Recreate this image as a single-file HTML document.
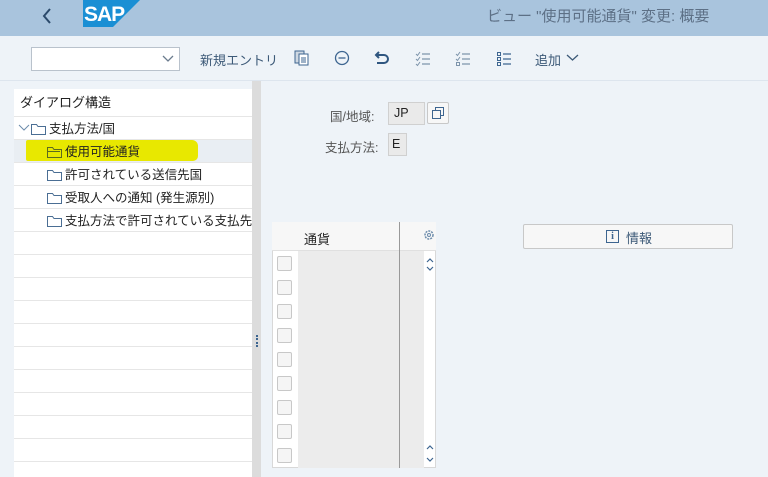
<!DOCTYPE html>
<html><head><meta charset="utf-8"><style>
*{margin:0;padding:0;box-sizing:border-box}
html,body{width:768px;height:477px;overflow:hidden}
body{background:#eef3f8;font-family:"Liberation Sans","Noto Sans CJK JP",sans-serif;position:relative;color:#222}
.a{position:absolute}
.hdr{left:0;top:0;width:768px;height:36px;background:#a9c4dd}
.tb{left:0;top:36px;width:768px;height:45px;background:#eef3f8;border-bottom:1px solid #dde5ee}
.lp{left:14px;top:89px;width:238px;height:388px;background:#fff}
.row{position:absolute;left:0;width:238px;height:23px;border-bottom:1px solid #e6e6e6;font-size:12.5px;line-height:24px;white-space:nowrap;overflow:hidden}
.f{display:inline-block;vertical-align:-2px;margin-right:3px}
.cb{position:absolute;left:5px;width:15px;height:15px;border:1px solid #c8c8c8;background:#f5f5f5;border-radius:2px}
</style></head><body>
<div class="a hdr"></div>
<svg class="a" style="left:40px;top:6px" width="14" height="20"><path d="M10 3 L4 10 L10 17" stroke="#2b4a6b" stroke-width="2" fill="none"/></svg>
<svg class="a" style="left:83px;top:0" width="57" height="27"><polygon points="0,0 57,0 30,27 0,27" fill="#1a8fd4"/><text x="1" y="21" font-family="Liberation Sans" font-weight="bold" font-size="21" fill="#fff" letter-spacing="-1">SAP</text></svg>
<div class="a" style="left:487px;top:5px;font-size:15px;color:#5d7086">ビュー "使用可能通貨" 変更: 概要</div>
<div class="a tb"></div>
<div class="a" style="left:31px;top:47px;width:149px;height:24px;background:#fff;border:1px solid #b9c2cc"></div>
<svg class="a" style="left:162px;top:55px" width="12" height="8"><path d="M1 1 L6 6 L11 1" stroke="#6b7c8e" stroke-width="1.3" fill="none"/></svg>
<div class="a" style="left:200px;top:50px;font-size:13px;color:#3d5a78">新規エントリ</div>
<svg class="a" style="left:294px;top:50px" width="16" height="16"><rect x="1" y="1" width="9" height="12" fill="#cfd8e2" stroke="#3d6590"/><rect x="5" y="4" width="9" height="11" fill="#fff" stroke="#3d6590"/><path d="M7 8h5M7 10h5M7 12h5" stroke="#3d6590"/></svg>
<svg class="a" style="left:334px;top:50px" width="16" height="16"><circle cx="8" cy="8" r="6.5" stroke="#3d6590" stroke-width="1.3" fill="none"/><path d="M4.5 8h7" stroke="#3d6590" stroke-width="1.3"/></svg>
<svg class="a" style="left:374px;top:50px" width="16" height="16"><path d="M5 2 L2 5 L5 8 M2 5 H10 A4 4 0 0 1 10 13 H3" stroke="#2f5680" stroke-width="2" fill="none"/></svg>
<svg class="a" style="left:415px;top:51px" width="16" height="16"><path d="M1 3l1.5 1.5L5 1M1 8l1.5 1.5L5 6M1 13l1.5 1.5L5 11" stroke="#7d94ab" fill="none"/><path d="M7 3h8M7 8h8M7 13h8" stroke="#7d94ab" stroke-width="1.3"/></svg>
<svg class="a" style="left:455px;top:51px" width="16" height="16"><path d="M1 3l1.5 1.5L5 1M1 8l1.5 1.5L5 6" stroke="#7d94ab" fill="none"/><rect x="1.5" y="11.5" width="3" height="3" stroke="#7d94ab" fill="none"/><path d="M7 3h8M7 8h8M7 13h8" stroke="#7d94ab" stroke-width="1.3"/></svg>
<svg class="a" style="left:496px;top:51px" width="16" height="16"><rect x="1.5" y="1.5" width="3" height="3" stroke="#3d6590" fill="none"/><rect x="1.5" y="6.5" width="3" height="3" stroke="#3d6590" fill="none"/><rect x="1.5" y="11.5" width="3" height="3" stroke="#3d6590" fill="none"/><path d="M7 3h8M7 8h8M7 13h8" stroke="#3d6590" stroke-width="1.3"/></svg>
<div class="a" style="left:535px;top:50px;font-size:13px;color:#3d5a78">追加</div>
<svg class="a" style="left:566px;top:54px" width="13" height="8"><path d="M1 1 L6.5 6 L12 1" stroke="#3d5a78" stroke-width="1.3" fill="none"/></svg>

<div class="a lp">
<div class="row" style="top:0;height:28px;line-height:27px;padding-left:6px;font-size:13px">ダイアログ構造</div>
<div class="row" style="top:28px;padding-left:4px"><svg class="f" width="12" height="10" style="margin-right:1px;vertical-align:0"><path d="M1 2 L6 7 L11 2" stroke="#6b8bab" fill="none"/></svg><svg class="f" width="15" height="13"><path d="M0.5 2.5V12.5H14.5V4.5H7L5.5 2.5Z" stroke="#4a6e94" fill="none"/></svg>支払方法/国</div>
<div class="row" style="top:51px;background:#e9eef3"></div>
<div class="a" style="left:12px;top:51px;width:172px;height:21px;background:#e8e800;border-radius:2px 6px 5px 2px"></div>
<div class="row" style="top:51px;padding-left:33px;border:none;background:transparent"><svg class="f" width="15" height="13"><path d="M0.5 2.5V12.5H14.5V4.5H7L5.5 2.5Z" stroke="#5c6a20" fill="none"/><path d="M0.5 6.5H13" stroke="#5c6a20"/></svg>使用可能通貨</div>
<div class="row" style="top:74px;padding-left:33px"><svg class="f" width="15" height="13"><path d="M0.5 2.5V12.5H14.5V4.5H7L5.5 2.5Z" stroke="#4a6e94" fill="none"/></svg>許可されている送信先国</div>
<div class="row" style="top:97px;padding-left:33px"><svg class="f" width="15" height="13"><path d="M0.5 2.5V12.5H14.5V4.5H7L5.5 2.5Z" stroke="#4a6e94" fill="none"/></svg>受取人への通知 (発生源別)</div>
<div class="row" style="top:120px;padding-left:33px"><svg class="f" width="15" height="13"><path d="M0.5 2.5V12.5H14.5V4.5H7L5.5 2.5Z" stroke="#4a6e94" fill="none"/></svg>支払方法で許可されている支払先</div>
<div class="row" style="top:143px"></div><div class="row" style="top:166px"></div><div class="row" style="top:189px"></div><div class="row" style="top:212px"></div><div class="row" style="top:235px"></div><div class="row" style="top:258px"></div><div class="row" style="top:281px"></div><div class="row" style="top:304px"></div><div class="row" style="top:327px"></div><div class="row" style="top:350px"></div><div class="row" style="top:373px"></div>
</div>
<div class="a" style="left:252px;top:81px;width:9px;height:396px;background:#dcdcdc"></div>
<div class="a" style="left:256px;top:335px;width:2px;height:12px;border-left:2px dotted #3d6590"></div>

<div class="a" style="left:330px;top:106px;font-size:12.5px;color:#555">国/地域:</div>
<div class="a" style="left:388px;top:102px;width:37px;height:23px;background:#eaeaea;border:1px solid #d0d0d0;font-size:12.5px;line-height:21px;padding-left:5px">JP</div>
<div class="a" style="left:427px;top:102px;width:22px;height:22px;background:#f7f7f7;border:1px solid #c8c8c8;border-radius:2px"></div>
<svg class="a" style="left:431px;top:106px" width="14" height="14"><rect x="1.5" y="4.5" width="8" height="8" stroke="#3d6590" fill="none"/><path d="M4.5 4.5V1.5h8v8h-3" stroke="#3d6590" fill="none"/></svg>
<div class="a" style="left:325px;top:137px;font-size:12.5px;color:#555">支払方法:</div>
<div class="a" style="left:388px;top:133px;width:19px;height:23px;background:#eaeaea;border:1px solid #d0d0d0;font-size:12.5px;line-height:21px;padding-left:3px">E</div>

<div class="a" style="left:272px;top:222px;width:164px;height:246px;background:#fff;border:1px solid #d8d8d8"></div>
<div class="a" style="left:272px;top:222px;width:164px;height:29px;background:#f7f7f7;border-bottom:1px solid #e0e0e0"></div>
<div class="a" style="left:304px;top:229px;font-size:13px">通貨</div>
<svg class="a" style="left:423px;top:229px" width="12" height="12"><circle cx="6" cy="6" r="4" stroke="#6b8bab" stroke-width="1.5" fill="none" stroke-dasharray="2 1"/><circle cx="6" cy="6" r="1.5" stroke="#6b8bab" fill="none"/></svg>
<div class="a" style="left:298px;top:251px;width:126px;height:217px;background:#ececec"></div>
<div class="a" style="left:399px;top:222px;width:1px;height:246px;background:#999"></div>
<div class="a" style="left:272px;top:251px">
<div class="cb" style="top:5px"></div><div class="cb" style="top:29px"></div><div class="cb" style="top:53px"></div><div class="cb" style="top:77px"></div><div class="cb" style="top:101px"></div><div class="cb" style="top:125px"></div><div class="cb" style="top:149px"></div><div class="cb" style="top:173px"></div><div class="cb" style="top:197px"></div>
</div>
<svg class="a" style="left:424px;top:254px" width="12" height="214"><path d="M3 8l3-3 3 3M3 13l3 3 3-3M3 195l3-3 3 3M3 204l3 3 3-3" stroke="#3d6590" stroke-width="1.2" fill="none"/></svg>

<div class="a" style="left:523px;top:224px;width:210px;height:25px;background:#f7f7f7;border:1px solid #c8c8c8;border-radius:2px"></div>
<div class="a" style="left:606px;top:230px;width:13px;height:13px;border:1px solid #3d6590;font-size:10px;line-height:11px;text-align:center;color:#3d6590;font-weight:bold;font-family:'Liberation Serif',serif">i</div>
<div class="a" style="left:626px;top:228px;font-size:13px;color:#3d5a78">情報</div>
</body></html>
